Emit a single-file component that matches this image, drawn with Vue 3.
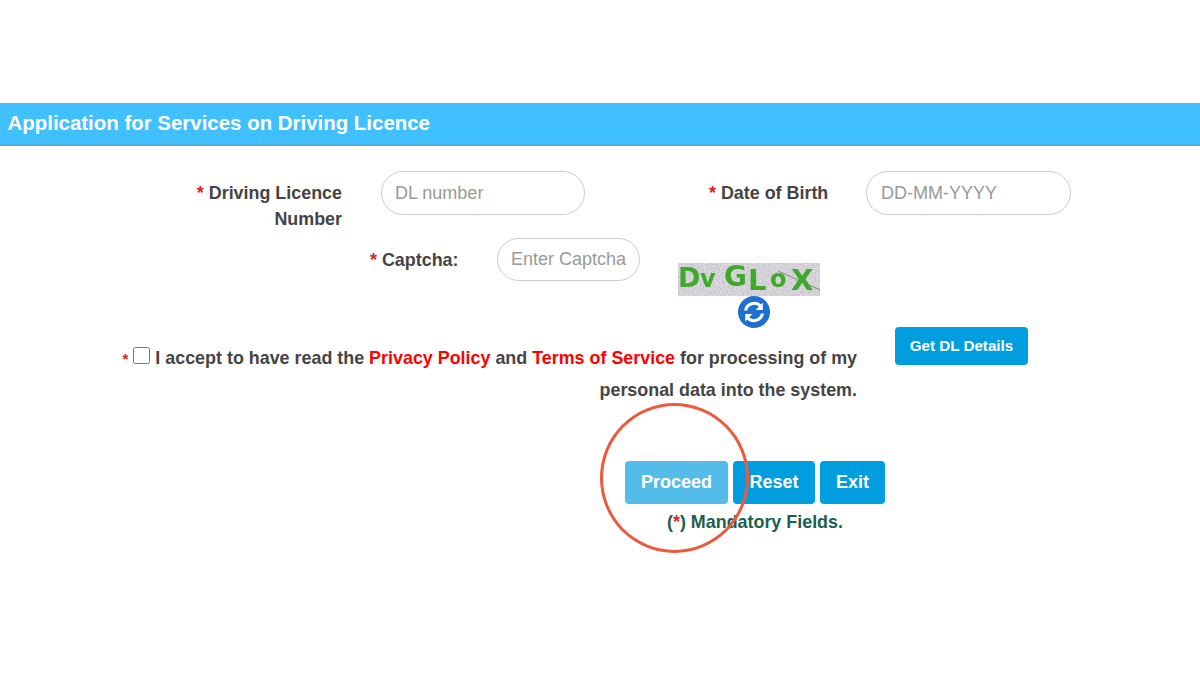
<script setup>
const letters = [
  { c: 'D', cls: 'l1' },
  { c: 'v', cls: 'l2' },
  { c: 'G', cls: 'l3' },
  { c: 'L', cls: 'l4' },
  { c: 'o', cls: 'l5' },
  { c: 'X', cls: 'l6' }
]
</script>

<template>
  <div class="page">
    <header class="bar">Application for Services on Driving Licence</header>

    <div class="row-one">
      <label class="lab lab-dl"><span class="star">*</span> Driving Licence Number</label>
      <input class="field field-dl" placeholder="DL number" />
      <label class="lab lab-dob"><span class="star">*</span> Date of Birth</label>
      <input class="field field-dob" placeholder="DD-MM-YYYY" />
    </div>

    <div class="row-two">
      <label class="lab lab-cap"><span class="star">*</span> Captcha:</label>
      <input class="field field-cap" placeholder="Enter Captcha" />
      <div class="cap-col">
        <div class="cap-img">
          <svg class="noise" width="142" height="33" aria-hidden="true">
            <filter id="grain">
              <feTurbulence type="fractalNoise" baseFrequency="0.75" numOctaves="2" seed="4" />
              <feColorMatrix type="matrix" values="0 0 0 0 0.42  0 0 0 0 0.40  0 0 0 0 0.46  1.5 0 0 0 -0.55" />
            </filter>
            <rect width="142" height="33" fill="#dedbe2" />
            <rect width="142" height="33" filter="url(#grain)" />
            <path d="M100 8 L142 27" stroke="#7d8a78" stroke-width="1" />
          </svg>
          <span v-for="l in letters" :key="l.cls" class="cap-letter" :class="l.cls">{{ l.c }}</span>
        </div>
        <svg class="refresh" width="32" height="32" viewBox="0 0 32 32" aria-hidden="true">
          <circle cx="16" cy="16" r="16" fill="#1f6fd0" />
          <path d="M7.5 14.5 A8.8 8.8 0 0 1 22.6 10.2" fill="none" stroke="#fff" stroke-width="3" />
          <path d="M24.8 6.6 V14 H17.6 Z" fill="#fff" />
          <path d="M24.5 17.5 A8.8 8.8 0 0 1 9.4 21.8" fill="none" stroke="#fff" stroke-width="3" />
          <path d="M7.2 25.4 V18 H14.4 Z" fill="#fff" />
        </svg>
      </div>
    </div>

    <div class="row-three">
      <div class="terms">
        <span class="star star-t">*</span>
        <input type="checkbox" class="check" />
        I accept to have read the <span class="red">Privacy Policy</span> and
        <span class="red">Terms of Service</span> for processing of my<br />personal data into the system.
      </div>
      <button class="btn btn-get">Get DL Details</button>
    </div>

    <div class="actions">
      <button class="btn act proceed">Proceed</button>
      <button class="btn act reset">Reset</button>
      <button class="btn act exit">Exit</button>
    </div>
    <p class="mandatory">(<span class="star-m">*</span>) Mandatory Fields.</p>

    <div class="ring"></div>
  </div>
</template>

<style scoped>
.page {
  position: relative;
  width: 1200px;
  height: 675px;
  overflow: hidden;
  background: #fff;
  padding-top: 103px;
  box-sizing: border-box;
  font-family: "Liberation Sans", Arial, sans-serif;
  color: #444;
}
.bar {
  height: 43px;
  box-sizing: border-box;
  background: #40c0ff;
  border-bottom: 2px solid #4fb0e0;
  color: #fff;
  font-size: 20.45px;
  font-weight: 700;
  line-height: 40px;
  padding-left: 7.5px;
}
.row-one {
  display: flex;
  align-items: flex-start;
  margin-top: 25px;
  padding-left: 190px;
}
.lab {
  font-size: 17.9px;
  font-weight: 700;
  line-height: 26px;
  text-align: right;
  color: #444;
}
.star { color: #e0222a; }
.lab-dl { width: 152px; margin-top: 9px; }
.lab-dob { width: 119px; margin-left: 124px; margin-top: 9px; white-space: nowrap; }
.lab-cap { width: 89px; margin-top: 9px; white-space: nowrap; text-align: left; }
.field {
  box-sizing: border-box;
  height: 44px;
  border: 1px solid #ccc;
  border-radius: 22px;
  background: #fff;
  padding: 0 13px;
  font-family: "Liberation Sans", Arial, sans-serif;
  font-size: 18px;
  color: #444;
  outline: none;
}
.field::placeholder { color: #999; opacity: 1; }
.field-dl { width: 204px; margin-left: 39px; }
.field-dob { width: 205px; margin-left: 38px; padding-left: 14px; }
.field-cap { width: 143px; height: 43px; margin-left: 38px; }
.row-two {
  display: flex;
  align-items: flex-start;
  margin-top: 6px;
  padding-left: 370px;
}
.cap-col {
  margin-left: 38px;
  margin-top: 25px;
  display: flex;
  flex-direction: column;
  align-items: center;
  width: 142px;
}
.cap-img {
  position: relative;
  width: 142px;
  height: 33px;
}
.noise { display: block; }
.cap-letter {
  position: absolute;
  font-family: "DejaVu Sans", sans-serif;
  font-weight: 700;
  color: #3fa92a;
  line-height: 1;
  filter: blur(0.4px);
}
.l1 { left: 0; top: 1px; font-size: 27px; }
.l2 { left: 22px; top: 4px; font-size: 24px; }
.l3 { left: 46px; top: 0; font-size: 28px; }
.l4 { left: 70px; top: 3px; font-size: 29px; }
.l5 { left: 92px; top: 4px; font-size: 24px; }
.l6 { left: 113px; top: 3px; font-size: 29px; }
.refresh { display: block; margin-top: 0; margin-left: 10px; }
.row-three {
  display: flex;
  align-items: flex-start;
  margin-top: -1px;
  padding-left: 100px;
}
.terms {
  width: 757px;
  margin-top: 16px;
  text-align: right;
  font-size: 17.9px;
  font-weight: 700;
  line-height: 31.5px;
  color: #444;
}
.star-t { font-size: 15px; line-height: 1; margin-right: 5px; }
.red { color: #f00; }
.check {
  width: 17px;
  height: 17px;
  margin: 0;
  vertical-align: 0;
}
.btn {
  border: none;
  background: #009ddf;
  color: #fff;
  font-family: "Liberation Sans", Arial, sans-serif;
  font-weight: 700;
  border-radius: 4px;
  padding: 0;
}
.btn-get {
  width: 133px;
  height: 38px;
  margin-left: 38px;
  padding-bottom: 2px;
  font-size: 15.2px;
}
.actions {
  display: flex;
  gap: 5px;
  margin-top: 55px;
  padding-left: 625px;
}
.act { height: 43px; font-size: 18px; }
.proceed { width: 103px; background: #54bce9; }
.reset { width: 82px; }
.exit { width: 65px; }
.mandatory {
  margin: 8px 0 0;
  padding-left: 667px;
  font-size: 17.9px;
  font-weight: 700;
  line-height: 20px;
  color: #1b6050;
}
.star-m { color: #e0222a; }
.ring {
  position: absolute;
  left: 600px;
  top: 403px;
  width: 149px;
  height: 150px;
  box-sizing: border-box;
  border: 3.5px solid #ec5a3c;
  border-radius: 50%;
}
</style>
